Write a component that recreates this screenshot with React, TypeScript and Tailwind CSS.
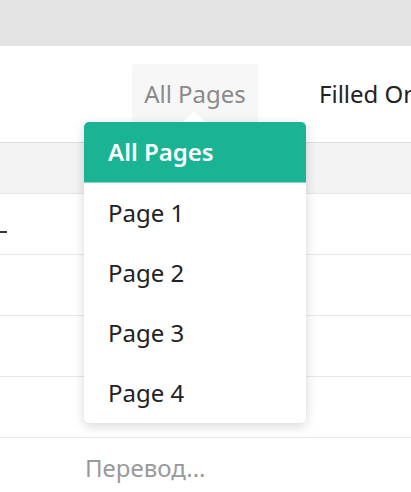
import { useState } from "react"

const pages = ["Page 1", "Page 2", "Page 3", "Page 4"]

export default function App() {
  const [selected, setSelected] = useState("All Pages")

  return (
    <div className="relative w-[411px] h-[492px] overflow-hidden bg-white font-['Noto_Sans','Open_Sans',sans-serif] text-[24px]">
      {/* top bar */}
      <div className="h-[46px] bg-[#e4e4e4]" />

      {/* toolbar */}
      <div className="flex h-[97px] items-start border-b border-[#dedede] pl-[132px] pt-[18px]">
        <div className="relative">
          <button className="flex h-[60px] w-[126px] items-center justify-center rounded-[3px] bg-[#f7f7f7] text-[#8a8a8a] whitespace-nowrap">
            {selected}
          </button>

          {/* dropdown */}
          <div className="absolute left-[-48px] top-[58px] z-10 w-[222px] rounded-[5px] bg-white shadow-[0_3px_12px_rgba(0,0,0,0.16)]">
            <div className="absolute left-[99px] top-[-11px] h-0 w-0 border-x-[11px] border-b-[11px] border-x-transparent border-b-white" />
            <div
              onClick={() => setSelected("All Pages")}
              className="flex h-[61px] items-center rounded-t-[5px] border-b border-[#86d5c5] bg-[#1ab394] pl-6 font-semibold text-white"
            >
              All Pages
            </div>
            {pages.map((p) => (
              <div
                key={p}
                onClick={() => setSelected(p)}
                className="flex h-[60px] items-center pl-6 text-[#222]"
              >
                {p}
              </div>
            ))}
          </div>
        </div>
        <div className="ml-[25px] h-[58px] w-px bg-[#dcdcdc]" />
        <div className="ml-[36px] flex h-[60px] items-center whitespace-nowrap text-[#222]">
          Filled Only
        </div>
      </div>

      {/* table header */}
      <div className="h-[51px] border-b border-[#e6e6e6] bg-[#f3f3f3]" />

      {/* rows */}
      <div className="h-[61px] border-b border-[#e8e8e8] pt-[37px]">
        <div className="h-[2px] w-[7px] bg-[#333]" />
      </div>
      {[0, 1, 2, 3].map((i) => (
        <div key={i} className="flex h-[61px] items-center border-b border-[#e8e8e8] pl-[85px] text-[#999]">
          Перевод...
        </div>
      ))}
    </div>
  )
}
